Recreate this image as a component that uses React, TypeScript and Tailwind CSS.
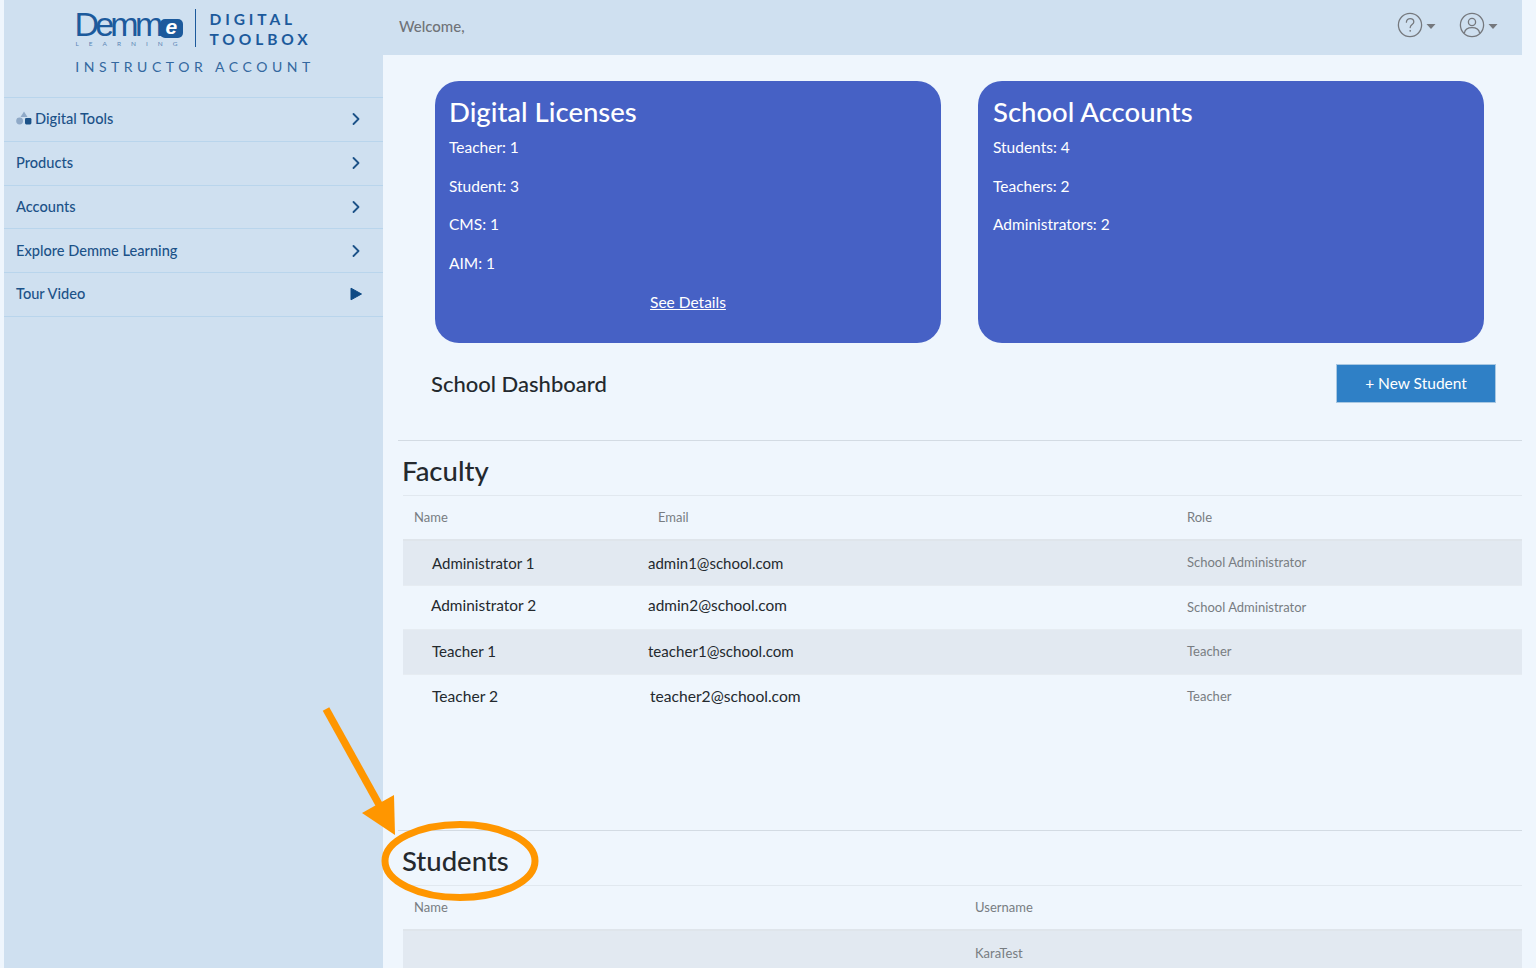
import React from "react";
import { ChevronRight } from "lucide-react";

const navItems = ["Digital Tools", "Products", "Accounts", "Explore Demme Learning", "Tour Video"];

const faculty = [
  { name: "Administrator 1", email: "admin1@school.com", role: "School Administrator", bg: "bg-[#e2e9f1]", h: "h-[45px]", size: "text-[15px]", nameCls: "pl-[29px]", emailCls: "pl-[0px]", y: "pt-[1px]", line: "border-b border-[#e6ecf2]" },
  { name: "Administrator 2", email: "admin2@school.com", role: "School Administrator", bg: "", h: "h-[44px]", size: "text-[15.4px]", nameCls: "pl-[28px]", emailCls: "pl-[0px]", y: "pb-[4px]", line: "border-b border-[#e6ecf2]" },
  { name: "Teacher 1", email: "teacher1@school.com", role: "Teacher", bg: "bg-[#e2e9f1]", h: "h-[45px]", size: "text-[15.1px]", nameCls: "pl-[29px]", emailCls: "pl-[0px]", y: "pb-[1px]", line: "border-b border-[#e6ecf2]" },
  { name: "Teacher 2", email: "teacher2@school.com", role: "Teacher", bg: "", h: "h-[44px]", size: "text-[15.6px]", nameCls: "pl-[29px]", emailCls: "pl-[2px]", y: "pb-[1px]", line: "" },
];

function Card({ title, lines, link, pad }: { title: string; lines: string[]; link?: string; pad: string }) {
  return (
    <div className={`w-[506px] h-[262px] rounded-[24px] bg-[#4661c5] text-white pt-[13px] flex flex-col ${pad}`}>
      <h2 className="text-[27.5px] leading-[35px] font-medium">{title}</h2>
      <div className="mt-[8px] flex flex-col gap-[18.7px] text-[15.5px] leading-[20px]">
        {lines.map((l) => (
          <p key={l}>{l}</p>
        ))}
        {link && <a className="underline text-center pr-[14px]">{link}</a>}
      </div>
    </div>
  );
}

function Logo() {
  return (
    <div className="flex flex-col items-center h-[98px] border-b border-[#b9d5ec]">
      <div className="flex items-start mt-[9px] h-[40px] w-[240px] ml-[2px]">
        <div className="w-[108px] text-[#1c5a9c] relative">
          <div className="font-['Liberation_Sans',sans-serif] text-[34px] leading-[31px] tracking-[-3.8px] flex items-center">
            <span>Demm</span>
            <span className="ml-[1px] w-[23px] h-[19px] mt-[8px] rounded-[5px] bg-[#1c5a9c] text-white text-[21px] font-bold leading-[16px] text-center tracking-normal italic">e</span>
          </div>
          <div className="text-[6.5px] leading-[8px] tracking-[10px] text-[#5b86b5] whitespace-nowrap pl-[1px]">LEARNING</div>
        </div>
        <div className="w-px h-[38px] bg-[#1c5a9c] ml-[12px]" />
        <div className="ml-[14px] text-[#1c5a9c] font-bold text-[15.5px] leading-[20px] tracking-[3.9px]">
          <div>DIGITAL</div>
          <div>TOOLBOX</div>
        </div>
      </div>
      <div className="mt-[9px] text-[14px] leading-[18px] tracking-[4.55px] text-[#34689f] whitespace-nowrap pl-[3px]">INSTRUCTOR ACCOUNT</div>
    </div>
  );
}

function Sidebar() {
  return (
    <aside className="w-[379px] shrink-0 bg-[#cfe0f0] h-[968px] text-[#1c5288]">
      <Logo />
      {navItems.map((item, i) => (
        <div key={item} className="h-[43.75px] pl-[12px] pr-[17px] flex items-center justify-between border-b border-[#b9d5ec] text-[14.6px] font-medium">
          <span className="flex items-center">
            {i === 0 && (
              <svg width="16" height="15" viewBox="0 0 16 15" className="mr-[3px] mt-[-1px]">
                <path d="M8 0.5 L11.5 6 L4.5 6 Z" fill="#8fa9c7" />
                <circle cx="3.6" cy="10" r="3.4" fill="#8fa9c7" />
                <rect x="9" y="7" width="6.4" height="6.4" rx="1.3" fill="#1c5288" />
              </svg>
            )}
            {item}
          </span>
          {i < 4 ? (
            <ChevronRight size={20} strokeWidth={2.2} className="text-[#1c5288]" />
          ) : (
            <svg width="12" height="14" viewBox="0 0 12 14" className="mr-[4px]">
              <path d="M1 1.2 L11.5 7 L1 12.8 Z" fill="#0f4a84" stroke="#0f4a84" strokeLinejoin="round" />
            </svg>
          )}
        </div>
      ))}
    </aside>
  );
}

function Caret() {
  return (
    <svg width="10" height="5" viewBox="0 0 10 5" className="ml-[3px] mt-[3px]">
      <path d="M0.5 0 L9.5 0 L5 5 Z" fill="#75787d" />
    </svg>
  );
}

function TopBar() {
  return (
    <header className="h-[55px] bg-[#cfe0f0] flex items-center justify-between pl-[16px] pr-[24px]">
      <span className="text-[15px] font-medium text-[#6f7378] mt-[-3px]">Welcome,</span>
      <div className="flex items-center gap-[23.5px] mt-[-5px]">
        <div className="flex items-center">
          <svg width="26" height="26" viewBox="0 0 26 26" fill="none" stroke="#75787d" strokeWidth="1.3">
            <circle cx="13" cy="13" r="11.6" />
            <path d="M9.4 10.2 C9.4 7.8 11.2 6.6 13.1 6.6 C15.1 6.6 16.8 7.9 16.8 10 C16.8 12.6 13.2 12.6 13.2 15.6" strokeLinecap="round" />
            <circle cx="13.2" cy="18.8" r="0.9" fill="#75787d" stroke="none" />
          </svg>
          <Caret />
        </div>
        <div className="flex items-center">
          <svg width="26" height="26" viewBox="0 0 26 26" fill="none" stroke="#75787d" strokeWidth="1.3">
            <circle cx="13" cy="13" r="11.6" />
            <circle cx="13" cy="10" r="3.6" />
            <path d="M5.4 21 C6 17.2 9 15.6 13 15.6 C17 15.6 20 17.2 20.6 21" />
          </svg>
          <Caret />
        </div>
      </div>
    </header>
  );
}

function Main() {
  return (
    <main className="relative bg-[#eff6fd] h-[913px] overflow-hidden text-[#24292e]">
      <div className="flex gap-[37px] pl-[52px] pt-[26px]">
        <Card pad="pl-[14px]" title="Digital Licenses" lines={["Teacher: 1", "Student: 3", "CMS: 1", "AIM: 1"]} link="See Details" />
        <Card pad="pl-[15px]" title="School Accounts" lines={["Students: 4", "Teachers: 2", "Administrators: 2"]} />
      </div>

      <div className="flex justify-between items-center pl-[48px] pr-[26px] mt-[21px] h-[39px]">
        <h3 className="text-[22px] font-medium">School Dashboard</h3>
        <button className="w-[160px] h-[39px] bg-[#2f80c6] border border-[#a9c8e2] text-white text-[15.5px]">+ New Student</button>
      </div>

      <section className="ml-[15px] mt-[37px] border-t border-[#d3dbe3]">
        <div className="ml-[5px]">
          <h2 className="h-[55px] leading-[60px] text-[27.5px] font-medium border-b border-[#e1e8ef]">
            <span className="-ml-[1px]">Faculty</span>
          </h2>
          <div className="h-[45px] grid grid-cols-[255px_529px_1fr] items-center text-[13px] text-[#787d82] border-b-2 border-[#dfe5eb]">
            <span className="pl-[11px]">Name</span>
            <span>Email</span>
            <span>Role</span>
          </div>
          {faculty.map((r) => (
            <div key={r.name} className={`grid grid-cols-[245px_539px_1fr] items-center ${r.line} ${r.h} ${r.bg}`}>
              <span className={`${r.size} ${r.nameCls} ${r.y}`}>{r.name}</span>
              <span className={`${r.size} ${r.emailCls} ${r.y}`}>{r.email}</span>
              <span className="text-[13px] text-[#787d82]">{r.role}</span>
            </div>
          ))}
        </div>
      </section>

      <section className="ml-[15px] mt-[111px] border-t border-[#d3dbe3]">
        <div className="ml-[5px]">
          <h2 className="h-[55px] leading-[60px] text-[27.5px] font-medium border-b border-[#e1e8ef]">
            <span className="-ml-[1px]">Students</span>
          </h2>
          <div className="h-[45px] grid grid-cols-[572px_1fr] items-center text-[13px] text-[#787d82] border-b-2 border-[#dfe5eb]">
            <span className="pl-[11px]">Name</span>
            <span>Username</span>
          </div>
          <div className="h-[45px] grid grid-cols-[572px_1fr] items-center bg-[#e2e9f1] text-[13px] text-[#787d82]">
            <span />
            <span>KaraTest</span>
          </div>
        </div>
      </section>
    </main>
  );
}

export default function App() {
  return (
    <div className="relative w-[1536px] h-[968px] overflow-hidden bg-[#eff6fd] pl-[4px] pr-[14px] flex font-['Lato','Liberation_Sans',sans-serif]">
      <Sidebar />
      <div className="flex-1 min-w-0">
        <TopBar />
        <Main />
      </div>
      <svg className="absolute left-0 top-0 pointer-events-none" width="1536" height="968" viewBox="0 0 1536 968" fill="none">
        <path d="M326 709 L381 808" stroke="#ff9600" strokeWidth="7.5" />
        <path d="M362 813 L394 795 L395 835 Z" fill="#ff9600" />
        <ellipse cx="460" cy="861" rx="75" ry="36.5" stroke="#ff9600" strokeWidth="7" />
      </svg>
    </div>
  );
}
